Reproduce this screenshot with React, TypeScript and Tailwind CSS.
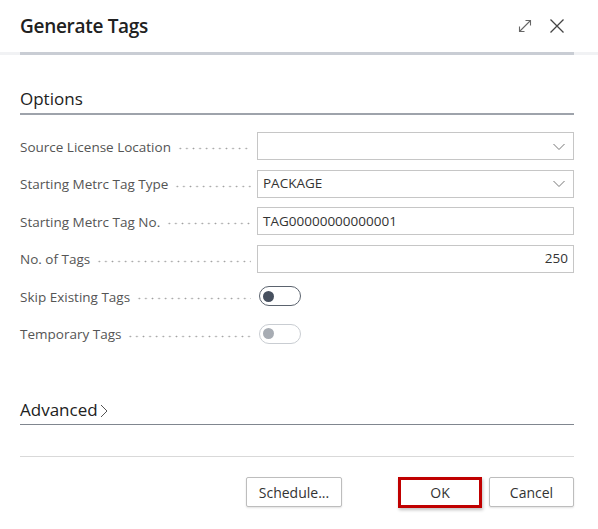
const rows = [
  { label: 'Source License Location', kind: 'select', value: '' },
  { label: 'Starting Metrc Tag Type', kind: 'select', value: 'PACKAGE' },
  { label: 'Starting Metrc Tag No.', kind: 'text', value: 'TAG00000000000001' },
  { label: 'No. of Tags', kind: 'number', value: '250' },
  { label: 'Skip Existing Tags', kind: 'toggle', value: '' },
  { label: 'Temporary Tags', kind: 'toggle-disabled', value: '' },
]

const Dots = () => (
  <div className="flex-1 h-[3px] mx-[6px] mt-[3px] bg-[radial-gradient(circle,#9e9e9e_0.7px,transparent_1.1px)] bg-[length:6.6px_3px] bg-repeat-x" />
)

const Toggle = ({ disabled }: { disabled?: boolean }) => (
  <div
    className={`w-[42px] h-[20px] rounded-full border-[1.5px] flex items-center pl-[3px] ${
      disabled ? 'border-[#c9cdd2]' : 'border-[#5b636e]'
    }`}
  >
    <div className={`w-[11px] h-[11px] rounded-full ${disabled ? 'bg-[#a7acb3]' : 'bg-[#47505f]'}`} />
  </div>
)

export default function App() {
  return (
    <div className="w-[598px] h-[529px] bg-white font-['Open_Sans',sans-serif] text-[#212121]">
      {/* Header */}
      <div className="h-[52px] pl-5 pr-[33px] flex items-center justify-between">
        <h1 className="text-[19px] font-semibold tracking-[-0.3px] mt-[1px]">Generate Tags</h1>
        <div className="flex items-center gap-[16px]">
          <svg width="16" height="16" viewBox="0 0 16 16" fill="none" stroke="#666" strokeWidth="1.1">
            <path d="M2.5 13.5 L13.5 2.5" />
            <path d="M8.5 2.5 H13.5 V7.5" />
            <path d="M2.5 8.5 V13.5 H7.5" />
          </svg>
          <svg width="16" height="16" viewBox="0 0 16 16" fill="none" stroke="#444" strokeWidth="1.3">
            <path d="M1.5 1.5 L14.5 14.5 M14.5 1.5 L1.5 14.5" />
          </svg>
        </div>
      </div>
      <div className="h-[3px] bg-[#f1f2f4]">
        <div className="h-full ml-5 mr-6 bg-[#c9cdd4]" />
      </div>

      {/* Options */}
      <div className="pl-5 pr-6">
        <div className="mt-[32px] border-b-2 border-[#9ea3ab] pb-[2px]">
          <h2 className="text-[17px] leading-[24px]">Options</h2>
        </div>

        <div className="mt-[17px] flex flex-col gap-[9.5px]">
          {rows.map((row) => (
            <div key={row.label} className="h-[28px] flex items-center">
              <div className="w-[237px] flex items-center text-[13.5px] text-[#555] mt-[2px]">
                <span className="whitespace-nowrap">{row.label}</span>
                <Dots />
              </div>
              {row.kind === 'toggle' || row.kind === 'toggle-disabled' ? (
                <div className="flex-1 pl-[2px]">
                  <Toggle disabled={row.kind === 'toggle-disabled'} />
                </div>
              ) : (
                <div
                  className={`flex-1 h-[28px] border border-[#c6c6c6] flex items-center px-[5px] text-[13.5px] text-[#333] ${
                    row.kind === 'number' ? 'justify-end' : 'justify-between'
                  }`}
                >
                  <span>{row.value}</span>
                  {row.kind === 'select' && (
                    <svg width="12" height="8" viewBox="0 0 12 8" fill="none" stroke="#777" strokeWidth="1" className="mr-[3px] mt-[1px]">
                      <path d="M0.5 1 L6 6.5 L11.5 1" />
                    </svg>
                  )}
                </div>
              )}
            </div>
          ))}
        </div>

        {/* Advanced */}
        <div className="mt-[50px] border-b border-[#80868f] pb-[2px] flex items-center">
          <h2 className="text-[17px] leading-[24px]">Advanced</h2>
          <svg width="8" height="14" viewBox="0 0 8 14" fill="none" stroke="#555" strokeWidth="1" className="ml-[2px] mt-[3px]">
            <path d="M1 1 L7 7 L1 13" />
          </svg>
        </div>

        <div className="mt-[31px] border-b border-[#d9d9d9]" />

        {/* Footer buttons */}
        <div className="mt-[20px] flex justify-end items-center text-[14px] text-[#333]">
          <button className="w-[96px] h-[30px] border border-[#bdbdbd] rounded-[2px] bg-white shadow-[0_1px_2px_rgba(0,0,0,0.12)]">
            Schedule...
          </button>
          <button className="ml-[56px] w-[84px] h-[31px] border-[3px] border-[#c00000] bg-white shadow-[1px_2px_3px_rgba(0,0,0,0.25)]">
            OK
          </button>
          <button className="ml-[7px] w-[85px] h-[30px] border border-[#bdbdbd] rounded-[2px] bg-white shadow-[0_1px_2px_rgba(0,0,0,0.12)]">
            Cancel
          </button>
        </div>
      </div>
    </div>
  )
}
